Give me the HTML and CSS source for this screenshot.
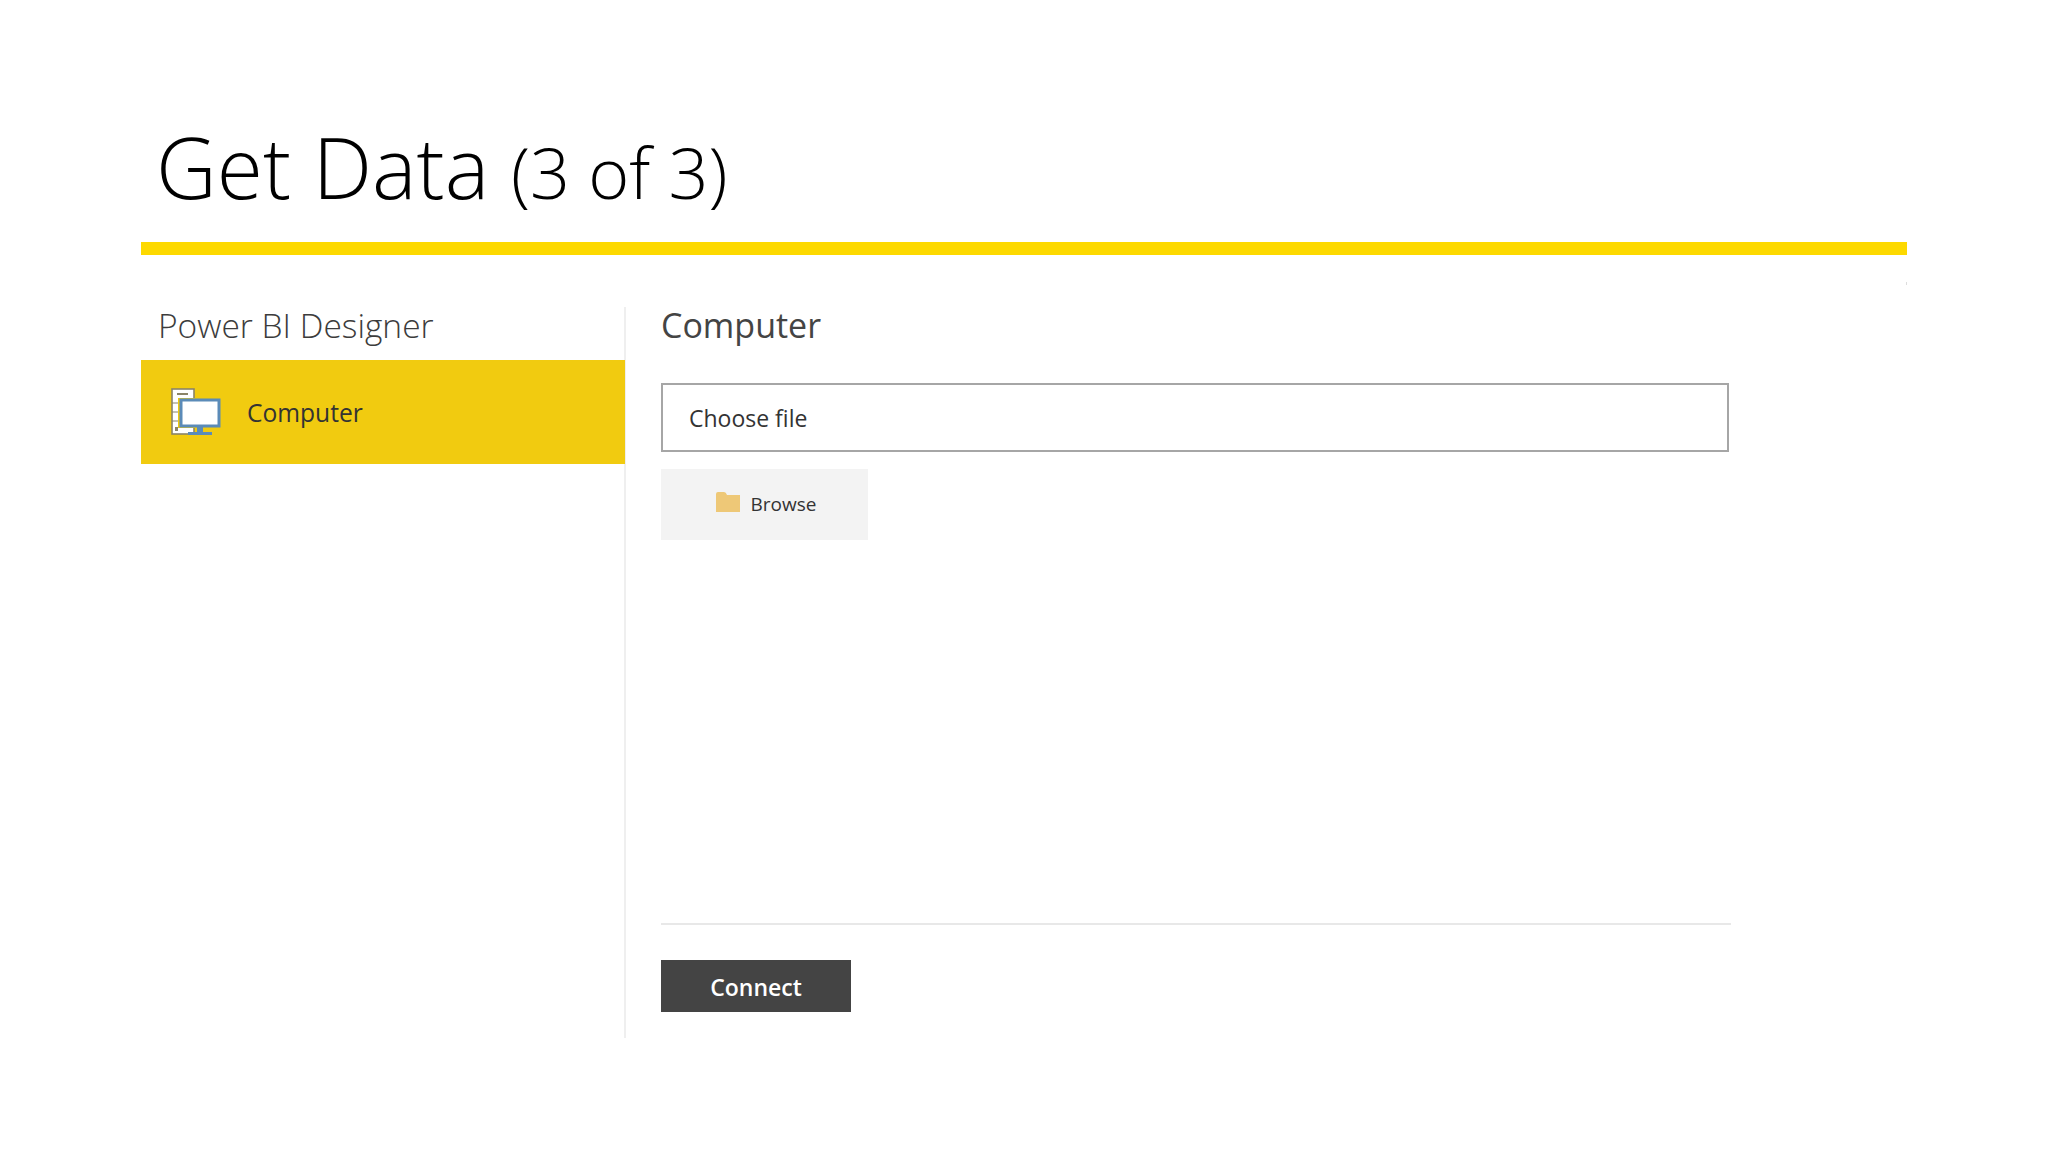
FILE: index.html
```html
<!DOCTYPE html>
<html lang="en">
<head>
<meta charset="utf-8">
<title>Get Data (3 of 3)</title>
<link rel="stylesheet" href="styles.css">
</head>
<body>
<main class="slide">
  <h1 class="title">Get Data <span class="title-sub">(3 of 3)</span></h1>
  <div class="rule"></div>
  <div class="speck"></div>
  <div class="dialog">
    <aside class="sidebar">
      <h2 class="side-heading">Power BI Designer</h2>
      <div class="side-item">
        <svg class="computer-icon" width="50" height="48" viewBox="0 0 50 48">
          <rect x="1" y="1" width="22" height="45" fill="#fff" stroke="#8a8468" stroke-width="1.6"/>
          <rect x="6" y="5" width="11" height="2" fill="#8a8468"/>
          <path d="M1 15H9M1 24H9M1 33H9" stroke="#8a8468" stroke-width="1.2"/>
          <rect x="4" y="39" width="3" height="4" fill="#8a8468"/>
          <rect x="7" y="10" width="42" height="30" fill="#efc810"/>
          <rect x="10" y="12" width="38" height="26" fill="#fff" stroke="#5b8bb8" stroke-width="3"/>
          <rect x="26" y="38" width="6" height="6" fill="#5b8bb8"/>
          <rect x="17" y="44" width="24" height="3" fill="#5b8bb8"/>
        </svg>
        <span class="side-label">Computer</span>
      </div>
    </aside>
    <section class="content">
      <h2 class="content-heading">Computer</h2>
      <div class="file-input">Choose file</div>
      <div class="browse">
        <svg class="folder-icon" width="24" height="22" viewBox="0 0 24 22">
          <path d="M0 3Q0 1 2 1H8Q10 1 11 4H24V21H0Z" fill="#eec877"/>
        </svg>
        <span class="browse-label">Browse</span>
      </div>
      <div class="spacer"></div>
      <div class="separator"></div>
      <div class="connect">Connect</div>
    </section>
  </div>
</main>
</body>
</html>
```

FILE: styles.css
```css
* { box-sizing: border-box; }
html, body { margin: 0; background: #fff; }
.slide {
  position: relative;
  width: 2048px;
  height: 1152px;
  padding: 0 141px;
  overflow: hidden;
  font-family: "Open Sans", sans-serif;
  display: flex;
  flex-direction: column;
}
.title {
  margin: 115px 0 0 15px;
  height: 127px;
  line-height: 104px;
  font-size: 84px;
  font-weight: 300;
  color: #000;
  white-space: nowrap;
}
.title-sub { font-size: 70px; }
.rule { width: 1766px; height: 13px; background: #fdd900; flex: none; }
.speck { position: absolute; left: 1906px; top: 282px; width: 1px; height: 3px; background: #ddd; }
.dialog { display: flex; margin-top: 52px; height: 731px; }
.sidebar { width: 485px; border-right: 2px solid #efefef; flex: none; }
.side-heading {
  margin: 0 0 0 17px;
  height: 53px;
  line-height: 36px;
  font-size: 33.5px;
  font-weight: 300;
  color: #3c3c3c;
}
.side-item {
  width: 484px;
  height: 104px;
  background: #f1cb10;
  display: flex;
  align-items: center;
  padding-left: 30px;
  gap: 26px;
}
.side-label { font-size: 24.6px; color: #333; }
.content { width: 1070px; margin-left: 35px; display: flex; flex-direction: column; }
.content-heading {
  margin: 0;
  height: 76px;
  line-height: 36px;
  font-size: 34px;
  font-weight: 400;
  color: #444;
}
.file-input {
  width: 1068px;
  height: 69px;
  border: 2px solid #a6a6a6;
  padding-left: 26px;
  line-height: 67px;
  font-size: 23px;
  color: #333;
}
.browse {
  margin-top: 17px;
  width: 207px;
  height: 71px;
  background: #f3f3f3;
  display: flex;
  align-items: center;
  justify-content: center;
  gap: 11px;
  font-size: 19px;
  color: #333;
}
.folder-icon { margin: -5px 0 0 3px; }
.browse-label { margin-top: -1px; }
.spacer { flex: 1; }
.separator { height: 2px; background: #e8e8e8; width: 1070px; }
.connect {
  margin-top: 35px;
  margin-bottom: 26px;
  width: 190px;
  height: 52px;
  background: #444;
  color: #fff;
  font-size: 23px;
  font-weight: 600;
  line-height: 54px;
  text-align: center;
}
```
